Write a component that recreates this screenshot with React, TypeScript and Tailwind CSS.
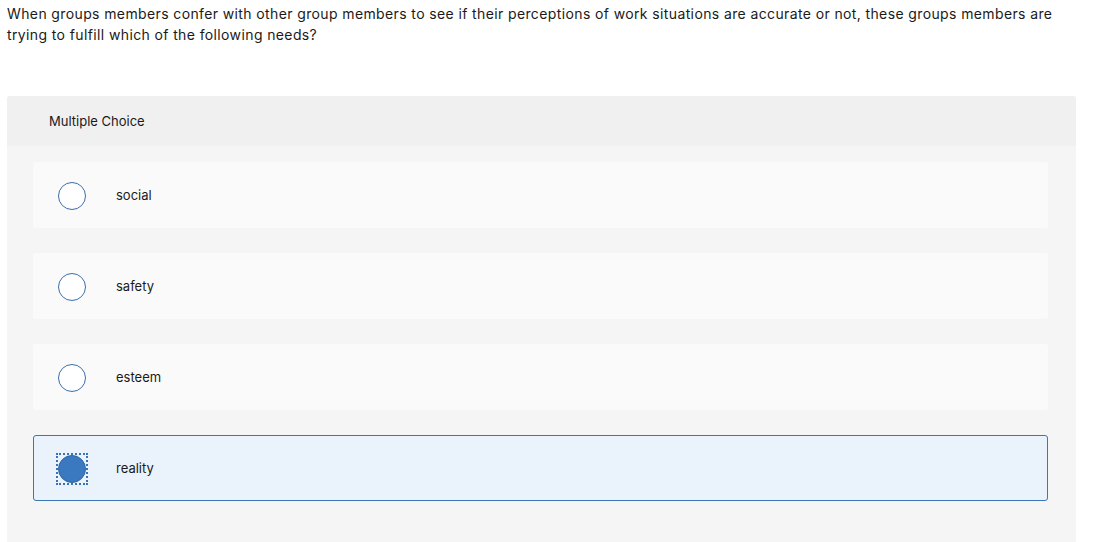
import { useState } from "react";

const OPTIONS = ["social", "safety", "esteem", "reality"];

export default function App() {
  const [selected, setSelected] = useState("reality");

  return (
    <div className="min-h-[542px] bg-white font-['Inter','Liberation_Sans',sans-serif] text-[#1a1a1a]">
      <p className="px-[7px] pt-[3px] text-[14px] leading-[21px] tracking-[0.38px]">
        When groups members confer with other group members to see if their perceptions of work situations are
        accurate or not, these groups members are
        <br />
        trying to fulfill which of the following needs?
      </p>

      <div className="mt-[51px] ml-[7px] w-[1069px] rounded-t-[3px] bg-[#f5f5f5] pb-[42px]">
        <div className="flex h-[50px] items-center rounded-t-[3px] bg-[#f0f0f0] pt-[2px] pl-[42px] text-[13px]">
          Multiple Choice
        </div>

        <div className="flex flex-col gap-[25px] pt-[16px] pl-[26px]">
          {OPTIONS.map((opt) => {
            const active = opt === selected;
            return (
              <button
                key={opt}
                type="button"
                onClick={() => setSelected(opt)}
                className={
                  active
                    ? "flex h-[66px] w-[1015px] items-center rounded-[3px] border border-[#3b76b8] bg-[#eaf2fb] pt-[1px] text-left"
                    : "flex h-[66px] w-[1015px] items-center rounded-[3px] border border-transparent bg-[#fafafa] pt-[1px] text-left"
                }
              >
                <span
                  className="ml-[22px] flex h-[32px] w-[32px] items-center justify-center border-2 border-dotted border-transparent data-[on=true]:border-[#3a73b5]"
                  data-on={active}
                >
                  {active ? (
                    <span className="h-[28px] w-[28px] rounded-full border border-[#2f64a3] bg-[#3a78c0]" />
                  ) : (
                    <span className="h-[28px] w-[28px] rounded-full border-[1.5px] border-[#3a6ea8] bg-white" />
                  )}
                </span>
                <span className="ml-[28px] text-[13px]">{opt}</span>
              </button>
            );
          })}
        </div>
      </div>
    </div>
  );
}
